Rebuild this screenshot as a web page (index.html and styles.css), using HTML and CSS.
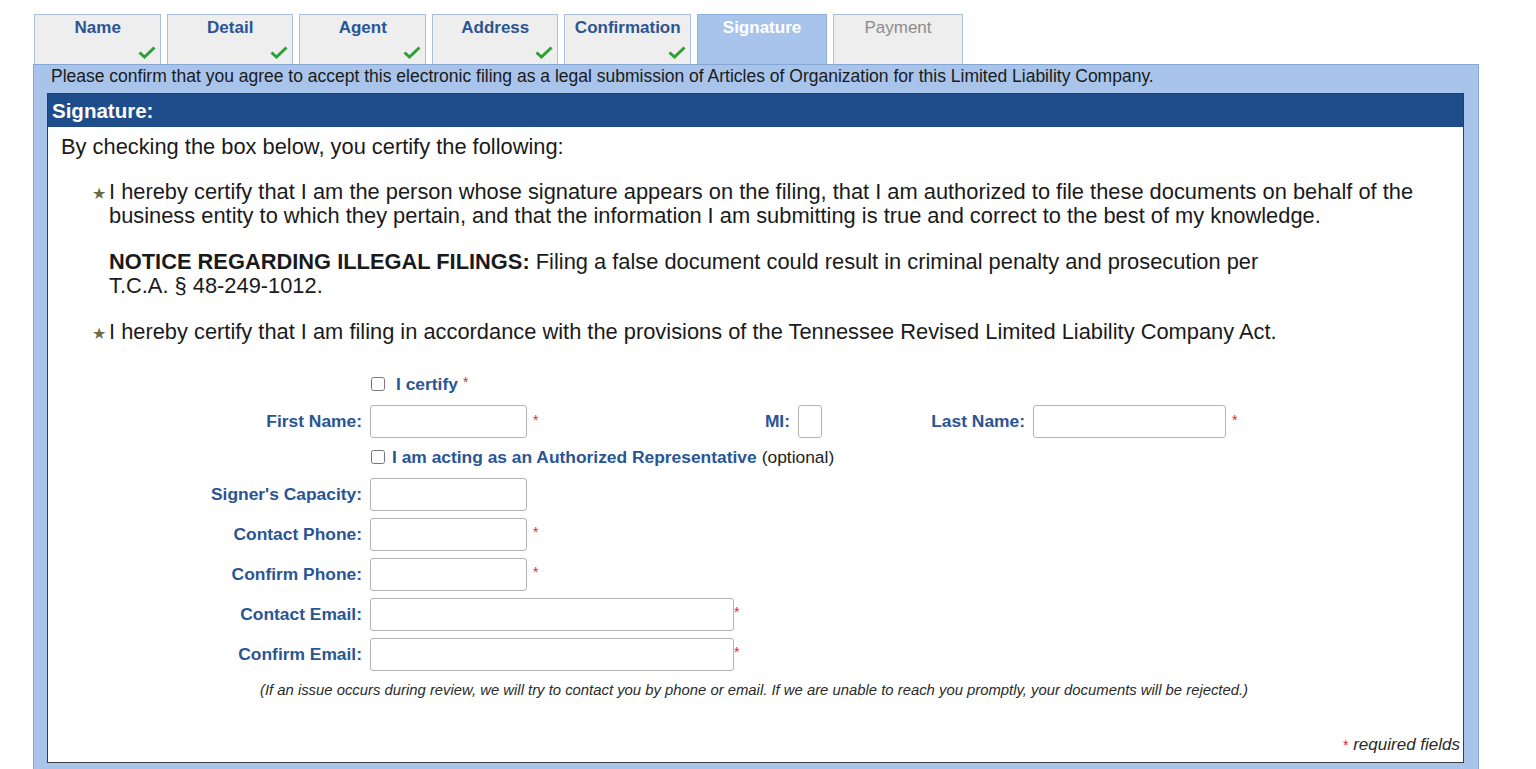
FILE: index.html
```html
<!DOCTYPE html>
<html lang="en">
  <head>
    <meta charset="UTF-8" />
    <meta name="viewport" content="width=device-width, initial-scale=1.0" />
    <title>Articles of Organization - Signature</title>
    <link rel="stylesheet" href="styles.css">
  </head>
  <body>
    <div class="wizard">
      <div class="tabs">
        <div class="tab tab--done">
          <span class="tab__title">Name</span>
          <svg class="tab__check" viewBox="0 0 18 13"><path d="M1.5 6.5 L6.5 11 L16.5 1.5" /></svg>
        </div>
        <div class="tab tab--done">
          <span class="tab__title">Detail</span>
          <svg class="tab__check" viewBox="0 0 18 13"><path d="M1.5 6.5 L6.5 11 L16.5 1.5" /></svg>
        </div>
        <div class="tab tab--done">
          <span class="tab__title">Agent</span>
          <svg class="tab__check" viewBox="0 0 18 13"><path d="M1.5 6.5 L6.5 11 L16.5 1.5" /></svg>
        </div>
        <div class="tab tab--done">
          <span class="tab__title">Address</span>
          <svg class="tab__check" viewBox="0 0 18 13"><path d="M1.5 6.5 L6.5 11 L16.5 1.5" /></svg>
        </div>
        <div class="tab tab--done">
          <span class="tab__title">Confirmation</span>
          <svg class="tab__check" viewBox="0 0 18 13"><path d="M1.5 6.5 L6.5 11 L16.5 1.5" /></svg>
        </div>
        <div class="tab tab--active">
          <span class="tab__title">Signature</span>
        </div>
        <div class="tab tab--disabled">
          <span class="tab__title">Payment</span>
        </div>
      </div>

      <div class="panel">
        <p class="panel__intro">Please confirm that you agree to accept this electronic filing as a legal submission of Articles of Organization for this Limited Liability Company.</p>

        <div class="section">
          <div class="section__header">Signature:</div>
          <div class="section__body">
            <p class="section__lead">By checking the box below, you certify the following:</p>

            <ul class="certify-list">
              <li class="certify-list__item">
                <span class="certify-list__star">&#9733;</span>
                <span>I hereby certify that I am the person whose signature appears on the filing, that I am authorized to file these documents on behalf of the business entity to which they pertain, and that the information I am submitting is true and correct to the best of my knowledge.</span>
              </li>
            </ul>
            <p class="notice"><b>NOTICE REGARDING ILLEGAL FILINGS:</b> Filing a false document could result in criminal penalty and prosecution per<br />T.C.A. &sect; 48-249-1012.</p>
            <ul class="certify-list certify-list--second">
              <li class="certify-list__item">
                <span class="certify-list__star">&#9733;</span>
                <span>I hereby certify that I am filing in accordance with the provisions of the Tennessee Revised Limited Liability Company Act.</span>
              </li>
            </ul>

            <form class="sign-form">
              <div class="sign-form__check sign-form__check--certify">
                <input type="checkbox" id="certify" />
                <label for="certify" class="sign-form__check-label">I certify</label>
                <span class="req req--inline">*</span>
              </div>

              <div class="sign-form__row sign-form__row--first">
                <label class="sign-form__label">First Name:</label>
                <input class="field field--name" type="text" />
                <span class="req req--gap">*</span>
                <label class="sign-form__label sign-form__label--mi">MI:</label>
                <input class="field field--mi" type="text" />
                <label class="sign-form__label sign-form__label--last">Last Name:</label>
                <input class="field field--last" type="text" />
                <span class="req req--gap">*</span>
              </div>

              <div class="sign-form__check sign-form__check--rep">
                <input type="checkbox" id="rep" />
                <label for="rep" class="sign-form__check-label">I am acting as an Authorized Representative</label>
                <span class="optional">(optional)</span>
              </div>

              <div class="sign-form__row">
                <label class="sign-form__label">Signer's Capacity:</label>
                <input class="field field--name" type="text" />
              </div>
              <div class="sign-form__row">
                <label class="sign-form__label">Contact Phone:</label>
                <input class="field field--name" type="text" />
                <span class="req req--gap">*</span>
              </div>
              <div class="sign-form__row">
                <label class="sign-form__label">Confirm Phone:</label>
                <input class="field field--name" type="text" />
                <span class="req req--gap">*</span>
              </div>
              <div class="sign-form__row">
                <label class="sign-form__label">Contact Email:</label>
                <input class="field field--email" type="text" />
                <span class="req">*</span>
              </div>
              <div class="sign-form__row">
                <label class="sign-form__label">Confirm Email:</label>
                <input class="field field--email" type="text" />
                <span class="req">*</span>
              </div>

              <p class="sign-form__note">(If an issue occurs during review, we will try to contact you by phone or email. If we are unable to reach you promptly, your documents will be rejected.)</p>
              <p class="sign-form__required"><span class="req">*</span> required fields</p>
            </form>
          </div>
        </div>
      </div>
    </div>
  </body>
</html>
```

FILE: styles.css
```css
* {
  box-sizing: border-box;
  margin: 0;
  padding: 0;
}
body {
  font-family: "Liberation Sans", Arial, sans-serif;
  color: #1a1a1a;
  background-color: white;
  overflow: hidden;
}
.wizard {
  padding-top: 14px;
  padding-left: 33px;
  width: 1479px;
}

/* tabs */
.tabs {
  display: flex;
  gap: 6px;
  padding-left: 1px;
}
.tab {
  width: 126.5px;
  height: 50px;
  display: flex;
  flex-direction: column;
  align-items: center;
  background-color: #eeeeee;
  border: 1px solid #a9bfdd;
  border-bottom: none;
  padding: 3px 4px 5px 5px;
}
.tab__title {
  font-size: 17px;
  font-weight: bold;
  color: #2a5595;
  line-height: 20px;
}
.tab__check {
  width: 18px;
  height: 13px;
  margin-top: auto;
  align-self: flex-end;
}
.tab__check path {
  fill: none;
  stroke: #2e9e36;
  stroke-width: 3;
}
.tab--active {
  background-color: #a8c4ea;
  border-color: #8fb0dc;
  width: 130px;
}
.tab--active .tab__title {
  color: white;
}
.tab--disabled {
  width: 130px;
}
.tab--disabled .tab__title {
  color: #8c8c8c;
  font-weight: normal;
}

/* panel */
.panel {
  width: 1446px;
  background-color: #a8c4ea;
  border: 1px solid #86a6d4;
  padding: 0 14px 12px 13px;
}
.panel__intro {
  font-size: 17.5px;
  line-height: 20px;
  padding: 1px 4px 7px 4px;
  color: #1a1a1a;
}
.section {
  border: 1px solid #3d3d3d;
  background-color: white;
}
.section__header {
  background-color: #1f4c8b;
  color: white;
  font-size: 20.5px;
  font-weight: bold;
  height: 33px;
  line-height: 33px;
  padding-left: 4px;
}
.section__body {
  padding: 8px 3px 8px 0;
  font-size: 21.85px;
  line-height: 24.5px;
}
.section__lead {
  padding-left: 13px;
}
.certify-list {
  list-style: none;
  margin-top: 20px;
  padding-left: 44px;
  padding-right: 40px;
}
.certify-list--second {
  margin-top: 21px;
}
.certify-list__item {
  display: grid;
  grid-template-columns: 17px 1fr;
}
.certify-list__star {
  color: #6e6a48;
  font-size: 16px;
  line-height: 24.5px;
  padding-top: 2px;
}
.notice {
  margin-top: 21px;
  padding-left: 61px;
}

/* form */
.sign-form {
  margin-top: 20px;
  font-size: 17.4px;
  line-height: 20px;
}
.sign-form__check {
  display: flex;
  align-items: center;
  padding-left: 323px;
}
.sign-form__check--certify {
  height: 36px;
}
.sign-form__check--rep {
  height: 34px;
}
.sign-form__check input {
  width: 14px;
  height: 14px;
  margin: 0;
  accent-color: #2a5595;
}
.sign-form__check--certify input {
  margin-right: 11px;
}
.sign-form__check--rep input {
  margin-right: 7px;
}
.sign-form__check-label {
  font-weight: bold;
  color: #2a5595;
}
.optional {
  margin-left: 5px;
  color: #222;
}
.sign-form__row {
  display: flex;
  align-items: center;
  height: 40px;
}
.sign-form__row--first {
  height: 38px;
}
.sign-form__label {
  width: 322px;
  padding-right: 8px;
  text-align: right;
  font-weight: bold;
  color: #2a5595;
}
.sign-form__label--mi {
  width: 257px;
}
.sign-form__label--last {
  width: 211px;
}
.field {
  height: 33px;
  border: 1px solid #b4b4b8;
  border-radius: 3px;
  background-color: white;
  font-size: 16px;
  padding: 0 4px;
}
.field--name {
  width: 157px;
}
.field--mi {
  width: 24px;
}
.field--last {
  width: 193px;
}
.field--email {
  width: 364px;
}
.req {
  color: #e3262b;
  font-size: 14px;
  align-self: flex-start;
  padding-top: 8px;
}
.req--gap {
  width: 14px;
  padding-left: 6px;
}
.req--inline {
  align-self: center;
  padding-top: 0;
  margin-left: 5px;
  margin-bottom: 4px;
}
.sign-form__note {
  margin-top: 8px;
  text-align: center;
  font-size: 14.85px;
  line-height: 16px;
  font-style: italic;
  color: #2a2a2a;
}
.sign-form__required {
  margin-top: 38px;
  text-align: right;
  font-size: 17px;
  line-height: 18px;
  font-style: italic;
  color: #2a2a2a;
}
.sign-form__required .req {
  font-style: normal;
}
```
